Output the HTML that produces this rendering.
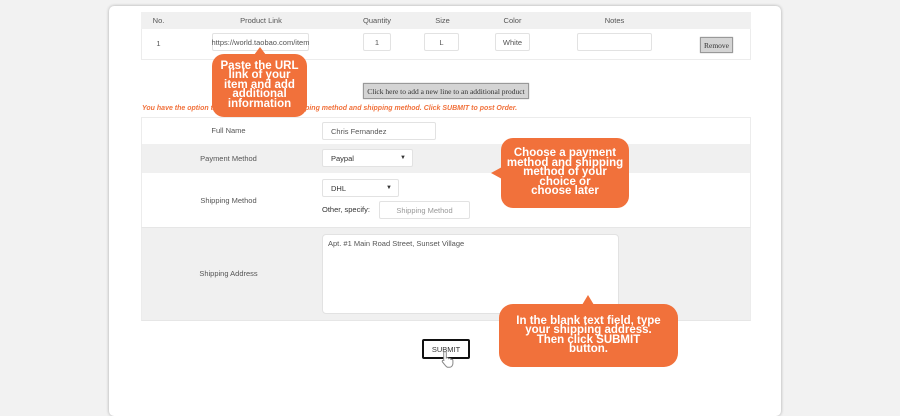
<!DOCTYPE html>
<html><head><meta charset="utf-8"><style>
*{margin:0;padding:0;box-sizing:border-box}
body{width:900px;height:400px;background:#f2f2f2;position:relative;overflow:hidden;font-family:"Liberation Sans",Arial,sans-serif;color:#444}
.card{position:absolute;left:109px;top:6px;width:672px;height:410px;background:#fff;border-radius:5px;box-shadow:0 0 3px rgba(0,0,0,.3)}
.a{position:absolute}
.t{font-size:7.5px;color:#555;text-align:center}
.inp{position:absolute;background:#fff;border:1px solid #e2e2e2;border-radius:2px;font-size:7.5px;color:#555;display:flex;align-items:center;justify-content:center}
.btn{position:absolute;background:#d4d4d4;border:1px solid #999;font-family:"Liberation Serif",serif;font-size:7.5px;color:#333;display:flex;align-items:center;justify-content:center;box-shadow:0 0 1px #aaa}
.bub{position:absolute;background:#f1713b;border-radius:12px;color:#fff;font-weight:bold;text-align:center;display:flex;align-items:center;justify-content:center;line-height:9.5px;font-size:11.5px}
.row{position:absolute;left:141px;width:610px;border-left:1px solid #ececec;border-right:1px solid #ececec}
</style></head><body>
<div class="card"></div>
<div class="a" style="left:141px;top:12px;width:610px;height:48px;border:1px solid #ececec"></div>
<div class="a" style="left:141px;top:12px;width:610px;height:17px;background:#f0f0f0"></div>
<div class="a t" style="left:141px;top:16px;width:35px">No.</div>
<div class="a t" style="left:212px;top:16px;width:98px">Product Link</div>
<div class="a t" style="left:357px;top:16px;width:40px">Quantity</div>
<div class="a t" style="left:420px;top:16px;width:45px">Size</div>
<div class="a t" style="left:494px;top:16px;width:37px">Color</div>
<div class="a t" style="left:577px;top:16px;width:75px">Notes</div>
<div class="a t" style="left:141px;top:39px;width:35px">1</div>
<div class="inp" style="left:212px;top:33px;width:97px;height:18px">https://world.taobao.com/item</div>
<div class="inp" style="left:363px;top:33px;width:28px;height:18px">1</div>
<div class="inp" style="left:424px;top:33px;width:35px;height:18px">L</div>
<div class="inp" style="left:495px;top:33px;width:35px;height:18px">White</div>
<div class="inp" style="left:577px;top:33px;width:75px;height:18px"></div>
<div class="btn" style="left:700px;top:37px;width:33px;height:16px">Remove</div>
<div class="btn" style="left:363px;top:83px;width:166px;height:16px">Click here to add a new line to an additional product</div>
<div class="a" style="left:142px;top:105px;font-size:7px;color:#f1713b;font-style:italic;font-weight:bold;white-space:nowrap">You have the option to choose payment and shipping method and shipping method. Click SUBMIT to post Order.</div>
<div class="row" style="top:117px;height:27px;background:#fff;border-top:1px solid #ececec"></div>
<div class="row" style="top:144px;height:29px;background:#f0f0f0"></div>
<div class="row" style="top:173px;height:54px;background:#fff"></div>
<div class="row" style="top:227px;height:94px;background:#f0f0f0;border-top:1px solid #e6e6e6;border-bottom:1px solid #e6e6e6"></div>
<div class="a t" style="left:141px;top:126px;width:175px">Full Name</div>
<div class="a t" style="left:141px;top:154px;width:175px">Payment Method</div>
<div class="a t" style="left:141px;top:196px;width:175px">Shipping Method</div>
<div class="a t" style="left:141px;top:269px;width:175px">Shipping Address</div>
<div class="inp" style="left:322px;top:122px;width:114px;height:18px;justify-content:flex-start;padding-left:8px">Chris Fernandez</div>
<div class="inp" style="left:322px;top:149px;width:91px;height:18px;justify-content:space-between;padding:0 6px 0 8px;font-size:7.5px;color:#333"><span>Paypal</span><span style="font-size:6px">▼</span></div>
<div class="inp" style="left:322px;top:179px;width:77px;height:18px;justify-content:space-between;padding:0 6px 0 8px;font-size:7.5px;color:#333"><span>DHL</span><span style="font-size:6px">▼</span></div>
<div class="a" style="left:322px;top:205px;font-size:7.5px;color:#333">Other, specify:</div>
<div class="inp" style="left:379px;top:201px;width:91px;height:18px;color:#999">Shipping Method</div>
<div class="inp" style="left:322px;top:234px;width:297px;height:80px;align-items:flex-start;justify-content:flex-start;padding:4px 5px;border-radius:4px">Apt. #1 Main Road Street, Sunset Village</div>
<div class="a" style="left:422px;top:339px;width:48px;height:20px;border:2px solid #111;border-radius:2px;background:#fff;font-size:7.5px;color:#333;display:flex;align-items:center;justify-content:center">SUBMIT</div>
<svg class="a" style="left:441px;top:350px" width="14" height="18" viewBox="0 0 14 18"><path d="M4 1.5c.8 0 1.3.6 1.3 1.3V8l.9-.3c.7-.2 1.3.3 1.3.9l1-.2c.7-.1 1.3.4 1.3 1l.8-.1c.8 0 1.3.5 1.3 1.2v3c0 2-1.5 3.8-3.5 3.8H7C5.5 17.3 4.8 16 3.8 14.8L1.5 12c-.5-.6-.3-1.4.4-1.7.5-.2 1 0 1.4.4l-.6-.4V2.8C2.7 2.1 3.2 1.5 4 1.5z" fill="#fff" stroke="#888" stroke-width="1"/></svg>
<div class="a" style="left:254px;top:47px;width:0;height:0;border-left:6px solid transparent;border-right:6px solid transparent;border-bottom:8px solid #f1713b"></div>
<div class="bub" style="left:212px;top:54px;width:95px;height:63px">Paste the URL<br>link of your<br>item and add<br>additional<br>information</div>
<div class="a" style="left:491px;top:167px;width:0;height:0;border-top:6px solid transparent;border-bottom:6px solid transparent;border-right:11px solid #f1713b"></div>
<div class="bub" style="left:501px;top:138px;width:128px;height:70px">Choose a payment<br>method and shipping<br>method of your<br>choice or<br>choose later</div>
<div class="a" style="left:582px;top:295px;width:0;height:0;border-left:6px solid transparent;border-right:6px solid transparent;border-bottom:10px solid #f1713b"></div>
<div class="bub" style="left:499px;top:304px;width:179px;height:63px;border-radius:14px">In the blank text field, type<br>your shipping address.<br>Then click SUBMIT<br>button.</div>
</body></html>
